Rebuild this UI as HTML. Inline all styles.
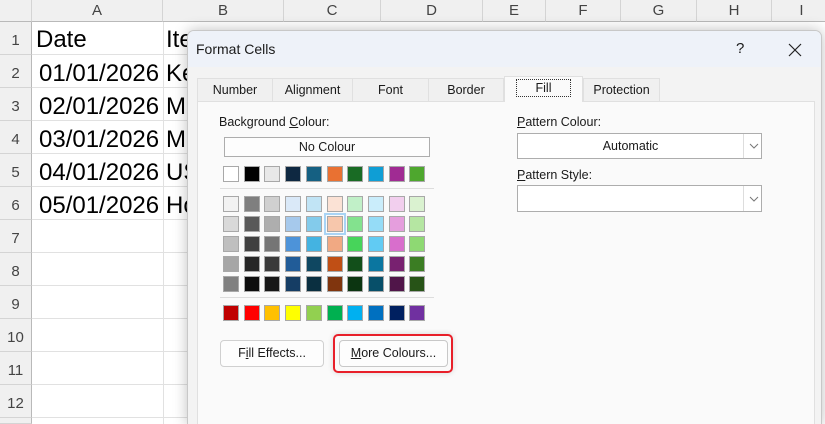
<!DOCTYPE html>
<html><head><style>
html,body{margin:0;width:825px;height:424px;overflow:hidden}
body{background:#fff;font-family:"Liberation Sans",sans-serif;position:relative}
.a{position:absolute}
.ch{position:absolute;top:0;height:22px;background:#f0f0f0;border-right:1px solid #d4d4d4;border-bottom:1px solid #b9b9b9;color:#444;font-size:15px;text-align:center;line-height:22px;box-sizing:border-box}
.rh{position:absolute;left:0;width:32px;background:#f0f0f0;border-right:1px solid #b9b9b9;border-bottom:1px solid #d4d4d4;color:#444;font-size:15px;text-align:center;box-sizing:border-box}
.hl{position:absolute;left:32px;width:160px;height:1px;background:#e1e1e1}
.cell{position:absolute;font-size:24px;color:#000}
.dlg{position:absolute;left:187px;top:30px;width:633px;height:394px;background:#f3f3f3;border:1px solid #c8c8c8;border-bottom:none;border-radius:7px 7px 0 0;box-shadow:0 0 14px rgba(0,0,0,.25);font-family:"Liberation Sans",sans-serif;font-size:12.5px;color:#1a1a1a;overflow:hidden}
.tab{position:absolute;top:47px;height:23px;border:1px solid #e0e0e0;border-bottom:none;background:#f0f0f0;text-align:center;line-height:23px;box-sizing:border-box}
.sw{position:absolute;width:14px;height:14px;border:1px solid #a8a8a8}
.btn{position:absolute;background:#fdfdfd;border:1px solid #d0d0d0;border-radius:4px;text-align:center;box-sizing:border-box}
</style></head><body>
<div class="ch" style="left:0;width:32px;background:#f0f0f0"></div>
<div class="ch" style="left:32px;width:131px">A</div>
<div class="ch" style="left:163px;width:121px">B</div>
<div class="ch" style="left:284px;width:97px">C</div>
<div class="ch" style="left:381px;width:102px">D</div>
<div class="ch" style="left:483px;width:63px">E</div>
<div class="ch" style="left:546px;width:75px">F</div>
<div class="ch" style="left:621px;width:76px">G</div>
<div class="ch" style="left:697px;width:75px">H</div>
<div class="ch" style="left:772px;width:60px">I</div>
<div class="rh" style="top:22px;height:33px;line-height:38px">1</div>
<div class="rh" style="top:55px;height:33px;line-height:38px">2</div>
<div class="rh" style="top:88px;height:33px;line-height:38px">3</div>
<div class="rh" style="top:121px;height:33px;line-height:38px">4</div>
<div class="rh" style="top:154px;height:33px;line-height:38px">5</div>
<div class="rh" style="top:187px;height:33px;line-height:38px">6</div>
<div class="rh" style="top:220px;height:33px;line-height:38px">7</div>
<div class="rh" style="top:253px;height:33px;line-height:38px">8</div>
<div class="rh" style="top:286px;height:33px;line-height:38px">9</div>
<div class="rh" style="top:319px;height:33px;line-height:38px">10</div>
<div class="rh" style="top:352px;height:33px;line-height:38px">11</div>
<div class="rh" style="top:385px;height:33px;line-height:38px">12</div>
<div class="rh" style="top:418px;height:6px"></div>
<div class="hl" style="top:54px"></div><div class="hl" style="top:87px"></div><div class="hl" style="top:120px"></div><div class="hl" style="top:153px"></div><div class="hl" style="top:186px"></div><div class="hl" style="top:219px"></div><div class="hl" style="top:252px"></div><div class="hl" style="top:285px"></div><div class="hl" style="top:318px"></div><div class="hl" style="top:351px"></div><div class="hl" style="top:384px"></div><div class="hl" style="top:417px"></div>
<div class="a" style="left:163px;top:22px;width:1px;height:402px;background:#e1e1e1"></div>
<div class="cell" style="left:36px;top:26px">Date</div><div class="cell" style="left:166px;top:26px">Item</div>
<div class="cell" style="left:39px;top:60px">01/01/2026</div><div class="cell" style="left:166px;top:60px">Ke</div>
<div class="cell" style="left:39px;top:93px">02/01/2026</div><div class="cell" style="left:166px;top:93px">M</div>
<div class="cell" style="left:39px;top:126px">03/01/2026</div><div class="cell" style="left:166px;top:126px">M</div>
<div class="cell" style="left:39px;top:159px">04/01/2026</div><div class="cell" style="left:166px;top:159px">US</div>
<div class="cell" style="left:39px;top:192px">05/01/2026</div><div class="cell" style="left:166px;top:192px">Ho</div>

<div class="dlg">
<div class="a" style="left:0;top:0;width:633px;height:36px;background:#eef2f9"></div>
<div class="a" style="left:8px;top:10px;font-size:14px">Format Cells</div>
<div class="a" style="left:548px;top:9px;font-size:15px">?</div>
<svg class="a" style="left:600px;top:12px" width="14" height="14"><path d="M1 1L13 13M13 1L1 13" stroke="#222" stroke-width="1.2"/></svg>
<div class="tab" style="left:9px;width:76px">Number</div>
<div class="tab" style="left:84px;width:81px">Alignment</div>
<div class="tab" style="left:164px;width:77px">Font</div>
<div class="tab" style="left:240px;width:76px">Border</div>
<div class="tab" style="left:316px;top:45px;height:26px;width:79px;background:#fafafa;z-index:2"><span style="border:1px dotted #333;padding:1px 19px">Fill</span></div>
<div class="tab" style="left:395px;width:77px">Protection</div>
<div class="a" style="left:9px;top:70px;width:616px;height:340px;background:#fafafa;border:1px solid #e0e0e0"></div>
<div class="a" style="left:31px;top:84px">Background <u>C</u>olour:</div>
<div class="btn" style="left:36px;top:106px;width:206px;height:20px;border-radius:0;border-color:#adadad;line-height:18px">No Colour</div>
<div class="a" style="left:32px;top:157px;width:214px;height:1px;background:#ddd"></div>
<div class="a" style="left:32px;top:266px;width:214px;height:1px;background:#ddd"></div>
<div id="sw"></div>
<div class="a" style="left:329px;top:84px"><u>P</u>attern Colour:</div>
<div class="a" style="left:329px;top:102px;width:245px;height:26px;background:#fff;border:1px solid #adadad;box-sizing:border-box"><div class="a" style="left:0;width:225px;top:5px;text-align:center">Automatic</div><div class="a" style="left:225px;top:0;width:1px;height:24px;background:#ddd"></div><svg class="a" style="left:231px;top:9px" width="10" height="6"><path d="M1 1L5 5L9 1" fill="none" stroke="#777"/></svg></div>
<div class="a" style="left:329px;top:137px"><u>P</u>attern Style:</div>
<div class="a" style="left:329px;top:154px;width:245px;height:27px;background:#fff;border:1px solid #adadad;box-sizing:border-box"><div class="a" style="left:225px;top:0;width:1px;height:25px;background:#ddd"></div><svg class="a" style="left:231px;top:10px" width="10" height="6"><path d="M1 1L5 5L9 1" fill="none" stroke="#777"/></svg></div>
<div class="btn" style="left:32px;top:309px;width:104px;height:27px;line-height:25px">F<u>i</u>ll Effects...</div>
<div class="a" style="left:145px;top:303px;width:120px;height:39px;border:2px solid #e8202a;border-radius:5px;box-sizing:border-box;box-shadow:0 0 6px rgba(0,0,0,.15)"></div>
<div class="btn" style="left:151px;top:309px;width:109px;height:27px;line-height:25px;border-color:#c8c8c8"><u>M</u>ore Colours...</div>
</div>
<script>
var rows=[[166,["#ffffff","#000000","#e8e8e8","#0e2841","#156082","#e97132","#196b24","#0f9ed5","#a02b93","#4ea72e"]],
[196,["#f2f2f2","#7f7f7f","#d0d0d0","#dae9f8","#c1e4f5","#fbe2d5","#c1f0c8","#caedfb","#f2cfee","#daf2d0"]],
[216,["#d9d9d9","#595959","#aeaeae","#a6c9ec","#83cbeb","#f7c7ac","#83e28e","#95dcf7","#e59edd","#b5e6a2"]],
[236,["#bfbfbf","#404040","#757575","#4d93d9","#44b3e1","#f1a983","#47d45a","#61cbf3","#d86ecc","#8ed973"]],
[256,["#a6a6a6","#262626","#3a3a3a","#215c98","#0f4761","#c04f15","#124f1a","#0b76a0","#782170","#3b7d23"]],
[276,["#808080","#0d0d0d","#171717","#153d64","#0a2f40","#80350e","#0c3511","#074f69","#501549","#275317"]],
[305,["#c00000","#ff0000","#ffc000","#ffff00","#92d050","#00b050","#00b0f0","#0070c0","#002060","#7030a0"]]];
var h="";rows.forEach(function(r){r[1].forEach(function(c,i){var x=223+Math.round(i*20.7)-188;var y=r[0]-31;var ex=(r[0]==216&&i==5)?";outline:2px solid #a9d4f5;outline-offset:1px":"";h+='<div class="sw" style="left:'+x+'px;top:'+y+'px;background:'+c+ex+'"></div>';});});
document.getElementById("sw").outerHTML=h;
</script>
</body></html>
